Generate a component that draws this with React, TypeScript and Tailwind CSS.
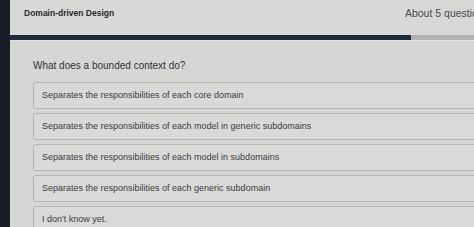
import React from "react";

const options = [
  "Separates the responsibilities of each core domain",
  "Separates the responsibilities of each model in generic subdomains",
  "Separates the responsibilities of each model in subdomains",
  "Separates the responsibilities of each generic subdomain",
  "I don't know yet.",
];

export default function App() {
  return (
    <div className="flex w-[474px] h-[227px] overflow-hidden bg-[#d6d6d4]" style={{ fontFamily: '"Liberation Sans", Arial, sans-serif' }}>
      <div className="w-[10px] shrink-0 bg-[#181c26]" />
      <div className="flex flex-col flex-1 min-w-0">
        <div className="h-[35px] shrink-0 flex items-start justify-between pt-[6px] pl-[14px] bg-[#d8d8d6]">
          <span className="text-[8.5px] font-bold text-[#2a2a2c] pt-[1px]">Domain-driven Design</span>
          <span className="text-[10.5px] text-[#4a4a4c] whitespace-nowrap -mr-[15px]">About 5 questions</span>
        </div>
        <div className="flex h-[5px] shrink-0">
          <div className="w-[401px] bg-[#1e2a3e]" />
          <div className="flex-1 bg-[#b0b2b4]" />
        </div>
        <div className="h-[1px] shrink-0 bg-[#e4e4e2]" />
        <div className="flex flex-col shrink-0 pl-[23px] pt-[17px]">
          <div className="text-[10px] leading-[16px] text-[#333335] mb-[8px]">What does a bounded context do?</div>
          <div className="flex flex-col gap-[4px] -mr-[10px]">
            {options.map((o) => (
              <div key={o} className="h-[27px] shrink-0 flex items-center pl-[8px] border border-[#b6b6b6] rounded-[2px] bg-[#d9d9d7] text-[9px] text-[#3c3c3e] whitespace-nowrap">
                {o}
              </div>
            ))}
          </div>
        </div>
      </div>
    </div>
  );
}
